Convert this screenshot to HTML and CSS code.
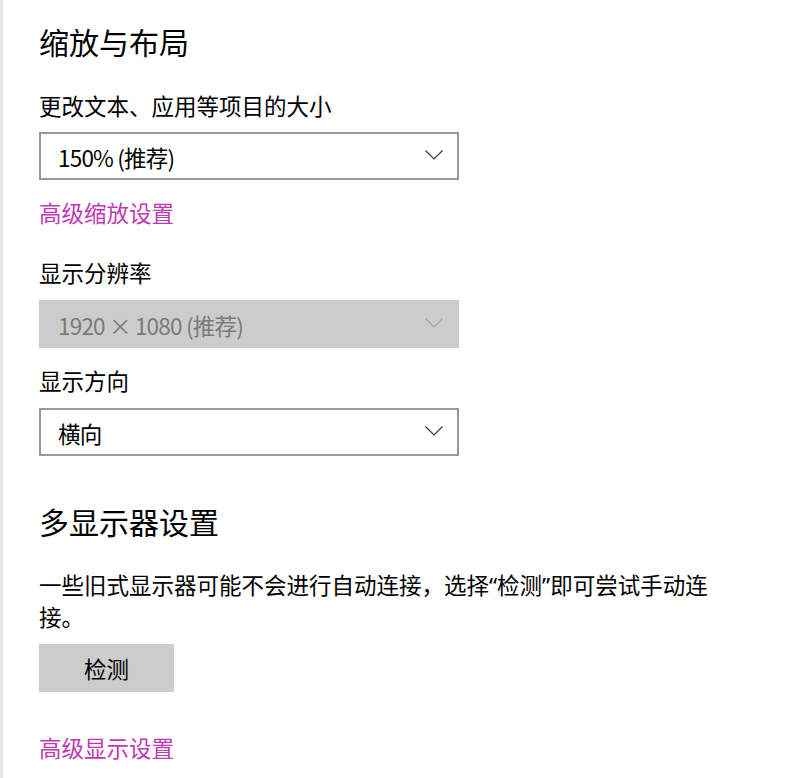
FILE: index.html
```html
<!DOCTYPE html>
<html lang="zh-CN">
  <head>
    <meta charset="utf-8">
    <title>显示</title>
    <link rel="stylesheet" href="styles.css">
  </head>
  <body>
    <div class="window">
      <div class="edge"></div>
      <main class="content">
        <h2 class="title">缩放与布局</h2>
        <div class="label first">更改文本、应用等项目的大小</div>
        <div class="select">
          <span>150% (推荐)</span>
          <svg class="chevron" width="18" height="10" viewBox="0 0 18 10"><path d="M0.5 0.5 L9 9 L17.5 0.5" fill="none" stroke="#333" stroke-width="1.1"/></svg>
        </div>
        <a class="link near" href="#">高级缩放设置</a>

        <div class="label">显示分辨率</div>
        <div class="select disabled">
          <span>1920 × 1080 (推荐)</span>
          <svg class="chevron" width="18" height="10" viewBox="0 0 18 10"><path d="M0.5 0.5 L9 9 L17.5 0.5" fill="none" stroke="#a6a6a6" stroke-width="1.1"/></svg>
        </div>

        <div class="label tight">显示方向</div>
        <div class="select">
          <span>横向</span>
          <svg class="chevron" width="18" height="10" viewBox="0 0 18 10"><path d="M0.5 0.5 L9 9 L17.5 0.5" fill="none" stroke="#333" stroke-width="1.1"/></svg>
        </div>

        <h2 class="title second">多显示器设置</h2>
        <p class="note">一些旧式显示器可能不会进行自动连接，选择“检测”即可尝试手动连接。</p>
        <button class="button">检测</button>
        <a class="link bottom" href="#">高级显示设置</a>
      </main>
    </div>
  </body>
</html>
```

FILE: styles.css
```css
html, body{
  margin:0;
  padding:0;
  background:#fff;
}
body{
  font-family: "Noto Sans CJK SC", "Noto Sans", sans-serif;
  color:#000;
}
.window{
  display:flex;
  min-height:778px;
}
.edge{
  width:3px;
  background:#e6e6e6;
  flex:none;
}
.content{
  display:flex;
  flex-direction:column;
  align-items:flex-start;
  padding:21px 0 0 36px;
}
.title{
  font-size:30px;
  font-weight:normal;
  line-height:40px;
  margin:0;
}
.title.second{
  margin-top:45px;
}
.label{
  font-size:22.5px;
  line-height:32px;
  margin-top:28px;
}
.label.tight{
  margin-top:16px;
}
.select{
  box-sizing:border-box;
  width:420px;
  height:48px;
  margin-top:12px;
  border:2px solid #999;
  background:#fff;
  display:flex;
  align-items:center;
  justify-content:space-between;
  padding:0 14px 0 17px;
  font-size:22.5px;
  letter-spacing:-0.8px;
}
.label.first + .select{
  margin-top:11px;
}
.select span{
  margin-top:2px;
}
.select.disabled{
  background:#ccc;
  border-color:#ccc;
  color:#7a7a7a;
}
.chevron{
  display:block;
  margin-top:-3px;
}
.link{
  font-size:22.5px;
  line-height:32px;
  color:#c239b3;
  text-decoration:none;
}
.link.near{
  margin-top:16px;
}
.link.bottom{
  margin-top:39px;
}
/* latin font first so the quotes come out narrow, as on Windows */
.note{
  font-family: "Noto Sans", "Noto Sans CJK SC", sans-serif;
  font-size:22.5px;
  line-height:32px;
  margin:29px 0 0;
  max-width:680px;
}
.button{
  margin-top:10px;
  width:135px;
  height:48px;
  border:none;
  background:#ccc;
  font-family: "Noto Sans CJK SC", sans-serif;
  font-size:22.5px;
  color:#000;
  padding:0;
}
```
